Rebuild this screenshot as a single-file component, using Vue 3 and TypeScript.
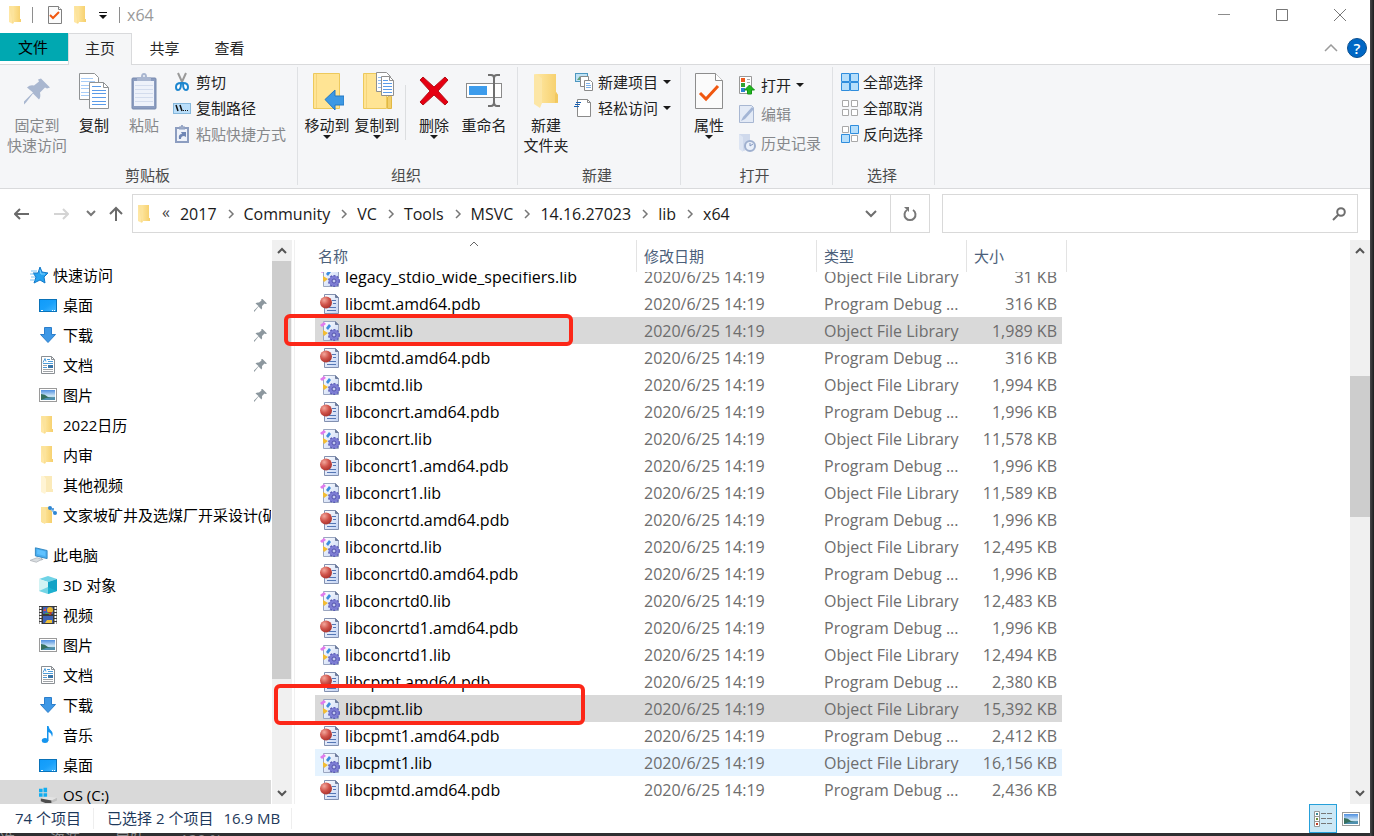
<script setup lang="ts">
interface FileRow {
  name: string
  size: string
  state?: 'selected' | 'hover'
}
interface NavItem {
  label: string
  icon: string
  pinned?: boolean
  root?: boolean
  gap?: boolean
  active?: boolean
}

const crumbs: string[] = ['2017', 'Community', 'VC', 'Tools', 'MSVC', '14.16.27023', 'lib', 'x64']

const nav: NavItem[] = [
  { label: '快速访问', icon: 'star', root: true },
  { label: '桌面', icon: 'desktop', pinned: true },
  { label: '下载', icon: 'download', pinned: true },
  { label: '文档', icon: 'document', pinned: true },
  { label: '图片', icon: 'picture', pinned: true },
  { label: '2022日历', icon: 'folder' },
  { label: '内审', icon: 'folder' },
  { label: '其他视频', icon: 'folder-pale' },
  { label: '文家坡矿井及选煤厂开采设计(矿', icon: 'folder-net' },
  { label: '此电脑', icon: 'pc', root: true, gap: true },
  { label: '3D 对象', icon: 'cube' },
  { label: '视频', icon: 'video' },
  { label: '图片', icon: 'picture' },
  { label: '文档', icon: 'document' },
  { label: '下载', icon: 'download' },
  { label: '音乐', icon: 'music' },
  { label: '桌面', icon: 'desktop' },
  { label: 'OS (C:)', icon: 'drive', active: true },
]

const files: FileRow[] = [
  { name: 'legacy_stdio_wide_specifiers.lib', size: '31 KB' },
  { name: 'libcmt.amd64.pdb', size: '316 KB' },
  { name: 'libcmt.lib', size: '1,989 KB', state: 'selected' },
  { name: 'libcmtd.amd64.pdb', size: '316 KB' },
  { name: 'libcmtd.lib', size: '1,994 KB' },
  { name: 'libconcrt.amd64.pdb', size: '1,996 KB' },
  { name: 'libconcrt.lib', size: '11,578 KB' },
  { name: 'libconcrt1.amd64.pdb', size: '1,996 KB' },
  { name: 'libconcrt1.lib', size: '11,589 KB' },
  { name: 'libconcrtd.amd64.pdb', size: '1,996 KB' },
  { name: 'libconcrtd.lib', size: '12,495 KB' },
  { name: 'libconcrtd0.amd64.pdb', size: '1,996 KB' },
  { name: 'libconcrtd0.lib', size: '12,483 KB' },
  { name: 'libconcrtd1.amd64.pdb', size: '1,996 KB' },
  { name: 'libconcrtd1.lib', size: '12,494 KB' },
  { name: 'libcpmt.amd64.pdb', size: '2,380 KB' },
  { name: 'libcpmt.lib', size: '15,392 KB', state: 'selected' },
  { name: 'libcpmt1.amd64.pdb', size: '2,412 KB' },
  { name: 'libcpmt1.lib', size: '16,156 KB', state: 'hover' },
  { name: 'libcpmtd.amd64.pdb', size: '2,436 KB' },
]

const isLib = (f: FileRow): boolean => f.name.endsWith('.lib')
</script>

<template>
  <div class="desktop">
    <svg class="defs" aria-hidden="true">
      <defs>
        <linearGradient id="g-folder" x1="0" x2="1"><stop offset="0" stop-color="#ffe9a6" /><stop offset="1" stop-color="#f6cf6b" /></linearGradient>
        <linearGradient id="g-blue" x1="0" y1="0" x2="1" y2="1"><stop offset="0" stop-color="#0f9bfa" /><stop offset=".5" stop-color="#18a0fb" /><stop offset="1" stop-color="#45b8ff" /></linearGradient>
        <linearGradient id="g-sky" x1="0" x2="0" y1="0" y2="1"><stop offset="0" stop-color="#4f8fe0" /><stop offset=".6" stop-color="#cfe7f6" /><stop offset="1" stop-color="#7fb0c4" /></linearGradient>
        <radialGradient id="g-ball" cx=".35" cy=".3" r=".8"><stop offset="0" stop-color="#f3a79c" /><stop offset=".5" stop-color="#d0544b" /><stop offset="1" stop-color="#a02a26" /></radialGradient>
        <linearGradient id="g-page" x1="0" y1="0" x2="1" y2="1"><stop offset="0" stop-color="#ffffff" /><stop offset="1" stop-color="#c3d3f3" /></linearGradient>
      </defs>
      <symbol id="folder" viewBox="0 0 18 18"><path d="M4 0h9v13h1v3H4z" fill="url(#g-folder)" /><path d="M2 0l4 3v15l-4-2z" fill="#ffe7a4" /><path d="M6 3v14" stroke="#f1cf78" /><path d="M2 0h3l2 3v13l-1 2z" fill="#fce39b" /></symbol>
      <symbol id="folder-pale" viewBox="0 0 18 18"><path d="M4 0h9v13h1v3H4z" fill="#fbeab9" /><path d="M2 0h3l2 3v13l-1 2-4-2z" fill="#fff4d4" /></symbol>
      <symbol id="folder-net" viewBox="0 0 18 18"><path d="M3 1h8l2 4v12H3z" fill="url(#g-folder)" /><path d="M2 1h3l2 3v12l-1 2-4-2z" fill="#fce39b" /><path d="M11 2l5 5" stroke="#8cc2ef" stroke-width="2" /><circle cx="11" cy="2" r="2" fill="#2f86d2" /><circle cx="16" cy="7" r="2" fill="#2f86d2" /><circle cx="14" cy="3" r="1" fill="#2f86d2" /></symbol>
      <symbol id="star" viewBox="0 0 18 18"><path d="M10 1l2 5 6 1-4 4 1 6-5-3-6 3 2-6-3-4h5z" fill="#25a2ef" stroke="#1379c9" /><path d="M10 4l1 4 4 0" fill="none" stroke="#7fd1ff" /><path d="M1 5h6M0 8h4M1 11h4M0 14h5" stroke="#7fc4f2" /></symbol>
      <symbol id="desktop" viewBox="0 0 18 18"><rect x=".5" y="3.500" width="17" height="12" fill="url(#g-blue)" stroke="#0a72b8" /><path d="M2 14.500h2M13 14.500h1M15 14.500h1" stroke="#fff" /></symbol>
      <symbol id="download" viewBox="0 0 18 18"><path d="M5.500 1.500h7v7h4l-7.500 8-7.500-8h4z" fill="#3e98e6" stroke="#2b7ecb" /></symbol>
      <symbol id="document" viewBox="0 0 18 18"><path d="M2.500.5h10l3 3v14h-13z" fill="#fff" stroke="#8a8f94" /><path d="M12.500.5v3h3" fill="none" stroke="#8a8f94" /><path d="M4 6.500l2-4 1 3M8 3.500h3M9 5.500h5M4 7.500h10M4 11.500h4" stroke="#4c9bd8" fill="none" /><path d="M4 9.500h4M4 13.500h10M4 15.500h10" stroke="#a0a4a8" /><rect x="9" y="9" width="5" height="3" fill="#3774a8" /></symbol>
      <symbol id="picture" viewBox="0 0 18 18"><rect x=".5" y="2.500" width="17" height="13" fill="#fff" stroke="#9a9a9a" /><rect x="2" y="4" width="14" height="10" fill="url(#g-sky)" /><path d="M2 8q4 0 7 3l7 1v2H2z" fill="#37705e" /><path d="M7 12l9-1v3H2z" fill="#4e8fae" /></symbol>
      <symbol id="pc" viewBox="0 0 20 18"><path d="M6 1l13 3v9L6 10z" fill="#4aaef0" stroke="#2c83bd" /><path d="M8 3l9 2v5L8 8z" fill="#5fc2ff" /><path d="M12 12l3 2-3 1" fill="#9aa4ad" /><path d="M0 15l8-3 5 2-6 3z" fill="#d9dde0" stroke="#b5babf" /></symbol>
      <symbol id="cube" viewBox="0 0 18 18"><path d="M9 0l9 3-9 3-9-3z" fill="#6fd3e6" /><path d="M0 3l9 3v12l-9-3z" fill="#d2f3f4" /><path d="M18 3L9 6v12l9-3z" fill="#13a3c6" /><path d="M9 11l9 4-9 3-9-3z" fill="#25bcd8" opacity=".55" /></symbol>
      <symbol id="video" viewBox="0 0 18 18"><rect width="18" height="18" fill="#3a3a3a" /><path d="M1.500 1v17M16.500 1v17" stroke="#fff" stroke-width="2" stroke-dasharray="2 1" /><rect x="4" y="1" width="10" height="7" fill="#3d62b6" /><rect x="4" y="10" width="10" height="7" fill="#3d62b6" /><path d="M4 5l3-3v3z" fill="#e5484a" /><circle cx="11" cy="4" r="3" fill="#e7b52a" /><path d="M9 6h4l-1 3h-2z" fill="#b73a2c" /><path d="M8 14h5v3H6z" fill="#f0c23b" /><path d="M6 7h5v1H6z" fill="#4da24b" /></symbol>
      <symbol id="music" viewBox="0 0 18 18"><ellipse cx="6" cy="14.500" rx="3.200" ry="2.500" fill="#1594ee" /><path d="M8 15V0h1.500q.5 3 3 5 2 2 .5 6-.5-4-3.500-5v9z" fill="#1594ee" /></symbol>
      <symbol id="drive" viewBox="0 0 20 18"><path d="M0 2h4v4H0zM5 1h4v5H5zM0 7h4v4H0zM5 7h4v4H5z" fill="#12adf0" /><path d="M2 13l7-2 11 1-6 3z" fill="#e3e3e3" /><path d="M2 13l12 2v3H7l-5-2z" fill="#4d4d4d" /><path d="M14 15l6-3v3l-6 3z" fill="#c2c2c2" /></symbol>
      <symbol id="pin" viewBox="0 0 26 26"><path d="M17 0l9 9-3 1-2-1-5 5q1 5-1 7l-6-6-7 9-2 2v-3l9-9-6-5q3-3 7-2l5-4-1-2z" /></symbol>
      <symbol id="check" viewBox="0 0 28 36"><path d="M.5.5h20l7 7v28H.5z" fill="#fbfbfb" stroke="#8d8d8d" /><path d="M20.500.5v7h7" fill="#fff" stroke="#8d8d8d" /><path d="M5 20l6 6L23 13" fill="none" stroke="#f0570f" stroke-width="3" /></symbol>
      <symbol id="check-small" viewBox="0 0 14 18"><path d="M.5.5h10l3 3v14H.5z" fill="#fbfbfb" stroke="#808080" /><path d="M10.500.5v3h3" fill="#fff" stroke="#808080" /><path d="M2 9l3 3 6-6" fill="none" stroke="#f0570f" stroke-width="2" /></symbol>
      <symbol id="copy" viewBox="0 0 30 36"><path d="M.5.5h15l4 4v22H.5z" fill="#fff" stroke="#8f9294" /><path d="M2 5.500h12M2 8.500h14M2 12.500h14M2 15.500h14M2 19.500h14M2 22.500h14" stroke="#a8cdf8" /><path d="M10.500 9.500h14l5 5v21h-19z" fill="#fff" stroke="#8f9294" /><path d="M24.500 9.500v5h5" fill="none" stroke="#8f9294" /><path d="M13 13.500h9M13 17.500h14M13 20.500h14M13 24.500h14M13 28.500h14M13 31.500h14" stroke="#5a9be8" /></symbol>
      <symbol id="lib" viewBox="0 0 20 20"><path d="M3.500.5h12l3 3v16h-15z" fill="url(#g-page)" stroke="#9aa6c0" /><path d="M15.500.5v3h3" fill="#6f7d9d" stroke="#6f7d9d" /><path d="M0 4l4-3 2 2-4 3z" fill="#e17bee" /><path d="M6 7l3-4 2 2-3 4z" fill="#3d8cdd" /><path d="M3 9l5 3-4 3-1-2z" fill="#f3bd33" /><circle cx="14" cy="14" r="5" fill="#7373cf" stroke="#5c5cb8" stroke-width="2" stroke-dasharray="2 1.200" /><circle cx="14" cy="14" r="4.800" fill="#7d7dd4" /><circle cx="14" cy="14" r="2" fill="#c3caf0" stroke="#5050aa" /></symbol>
      <symbol id="pdb" viewBox="0 0 20 20"><path d="M4.500.5h11l3 3v16h-14z" fill="url(#g-page)" stroke="#8290b0" /><path d="M15.500.5v3h3" fill="#6f7d9d" stroke="#6f7d9d" /><path d="M12 6.500h4M13 9.500h3M9 13.500h7M7 16.500h9" stroke="#5577b5" /><circle cx="6" cy="8.500" r="6" fill="url(#g-ball)" /></symbol>
    </svg>

    <div class="window">
      <header class="titlebar">
        <svg class="i18"><use href="#folder" /></svg>
        <span class="tsep"></span>
        <button class="plain qcheck" aria-label="属性"><svg width="14" height="18"><use href="#check-small" /></svg></button>
        <button class="plain qfolder" aria-label="新建文件夹"><svg class="i18"><use href="#folder" /></svg></button>
        <button class="plain qmore" aria-label="自定义快速访问工具栏"><svg width="8" height="8" viewBox="0 0 8 8"><path d="M0 .5h8" stroke="#111" /><path d="M0 3h8L4 7z" fill="#111" /></svg></button>
        <span class="tsep"></span>
        <span class="wtitle">x64</span>
        <div class="wbtns">
          <button class="plain" aria-label="最小化"><svg width="12" height="12" viewBox="0 0 12 12"><path d="M0 5.500h12" stroke="#8c8c8c" /></svg></button>
          <button class="plain" aria-label="最大化"><svg width="12" height="12" viewBox="0 0 12 12"><path d="M.5.5h11v11H.5z" fill="none" stroke="#777" /></svg></button>
          <button class="plain" aria-label="关闭"><svg width="12" height="12" viewBox="0 0 12 12"><path d="M0 0l12 12M12 0L0 12" stroke="#777" /></svg></button>
        </div>
      </header>

      <nav class="tabs">
        <button class="tab file">文件</button>
        <button class="tab current">主页</button>
        <button class="tab">共享</button>
        <button class="tab">查看</button>
        <div class="tabtools">
          <button class="plain" aria-label="最小化功能区"><svg width="14" height="8" viewBox="0 0 14 8"><path d="M1 7l6-6 6 6" fill="none" stroke="#9b9b9b" stroke-width="1.500" /></svg></button>
          <button class="plain help" aria-label="帮助">?</button>
        </div>
      </nav>

      <div class="ribbon">
        <section class="group g1">
          <div class="gbody">
            <button class="big wide off"><span class="pic"><svg class="bigpin" width="26" height="27"><use href="#pin" /></svg></span>固定到<br />快速访问</button>
            <button class="big"><span class="pic"><svg width="30" height="36"><use href="#copy" /></svg></span>复制</button>
            <button class="big off"><span class="pic"><svg width="26" height="38" viewBox="0 0 26 38"><rect x="1" y="6" width="24" height="31" rx="1" fill="#8c9dc0" stroke="#7789ae" /><rect x="3" y="9" width="20" height="25" fill="#eef2fa" /><path d="M4 13.500h18M4 17.500h18M4 21.500h18M4 25.500h18M4 29.500h18" stroke="#d3dced" /><path d="M6 9V5h4q0-4 3-4t3 4h4v4z" fill="#a9b6d0" /><circle cx="13" cy="4" r="1" fill="#f0f3f8" /></svg></span>粘贴</button>
            <div class="col">
              <button class="small"><svg viewBox="0 0 20 20"><path d="M6 1l5 11M14 1L9 12" stroke="#9a9a9a" stroke-width="2" /><path d="M9 11q-5 0-5 4 0 3 2 3 3 0 3-7zM11 11q5 0 5 4 0 3-2 3-3 0-3-7z" fill="#fff" stroke="#1d86cf" stroke-width="2" /></svg>剪切</button>
              <button class="small"><svg viewBox="0 0 20 20"><rect x="1.500" y="5.500" width="17" height="10" fill="#b9defa" stroke="#86b8dc" /><path d="M4 7l2 6M8 7l2 6" stroke="#111" stroke-width="1.500" /><path d="M11 12.500h1M13 12.500h1M15 12.500h1" stroke="#111" /></svg>复制路径</button>
              <button class="small off"><svg viewBox="0 0 20 20"><rect x="4" y="4" width="12" height="14" fill="#eef2fa" stroke="#8c9dc0" stroke-width="2" /><path d="M7 5V3h2l1-2 1 2h2v2z" fill="#a0aec9" stroke="#8c9dc0" /><path d="M7 15q-1-5 3-5l-1-2h5v5l-2-1q-3 0-3 3z" fill="#6f86b5" /></svg>粘贴快捷方式</button>
            </div>
          </div>
          <div class="glabel">剪贴板</div>
        </section>

        <section class="group g2">
          <div class="gbody">
            <button class="big"><span class="pic"><svg width="34" height="38" viewBox="0 0 34 38"><path d="M3.500 1.500h26v35h-26z" fill="#ffe494" stroke="#edc95c" /><path d="M6.500 2v34" stroke="#f5d47a" /><path d="M15 27.500L25 18v6h9v9h-9v5z" fill="#3c98e4" stroke="#2479c2" /></svg></span>移动到<i class="arr"></i></button>
            <button class="big"><span class="pic"><svg width="34" height="38" viewBox="0 0 34 38"><path d="M3.500 1.500h23v35h-23z" fill="#ffe494" stroke="#edc95c" /><path d="M6.500 2v34" stroke="#f5d47a" /><path d="M27.500 36.500V25l3-2 1 2v11.500z" fill="#f2cf6b" stroke="#e1b844" /><path d="M16.500.5h10l4 4v15h-14z" fill="#fff" stroke="#909090" /><path d="M18 5.500h3M18 8.500h3M18 11.500h3M18 15.500h3" stroke="#8fbdf2" /><path d="M21.500 4.500h8l4 4v15h-12z" fill="#fff" stroke="#909090" /><path d="M29.500 4.500v4h4" fill="none" stroke="#909090" /><path d="M23 8.500h5M23 11.500h9M23 14.500h9M23 17.500h9M23 20.500h9" stroke="#5a9be8" /></svg></span>复制到<i class="arr"></i></button>
            <span class="minisep"></span>
            <button class="big"><span class="pic"><svg width="32" height="32" viewBox="0 0 32 32"><path d="M2 5l3-3 11 10L27 2l3 3-10 11 10 11-3 3-11-10L5 30l-3-3 10-11z" fill="#e60012" stroke="#b3131b" /></svg></span>删除<i class="arr"></i></button>
            <button class="big"><span class="pic"><svg width="36" height="36" viewBox="0 0 36 36"><rect x=".5" y="10.500" width="35" height="14" fill="#fff" stroke="#8a8a8a" /><rect x="3" y="13" width="18" height="9" fill="#3d9cec" /><path d="M22 2h3q3 0 3 3v24q0 4-3 4h-3M34 2h-3q-3 0-3 3v24q0 4 3 4h3" fill="none" stroke="#707070" stroke-width="2" /></svg></span>重命名</button>
          </div>
          <div class="glabel">组织</div>
        </section>

        <section class="group g3">
          <div class="gbody">
            <button class="big"><span class="pic"><svg width="24" height="36" viewBox="0 0 24 36"><path d="M1 1h21v18l2 3v8H6z" fill="url(#g-folder)" /><path d="M22 19l2 3v7l-3 1V22z" fill="#f1c860" /><path d="M0 1l8 4v25l-2 5-6-4z" fill="#fce6a6" /></svg></span>新建<br />文件夹</button>
            <div class="col">
              <button class="small"><svg viewBox="0 0 20 20"><rect x="1.500" y="1.500" width="12" height="8" fill="#bfe2f5" stroke="#4d97c0" /><path d="M3 8l3-4 3 4z" fill="#5fa07b" /><path d="M6.500 4.500h8v10h-8z" fill="#fff" stroke="#8a8a8a" /><path d="M10.500 8.500h6l2 2v8h-8z" fill="#fff" stroke="#8a8a8a" /><path d="M12 11.500h4M12 13.500h5M12 15.500h5" stroke="#7db1ea" /></svg>新建项目<i class="arr"></i></button>
              <button class="small"><svg viewBox="0 0 20 20"><path d="M3.500 1.500h10l3 3v14h-13z" fill="#fff" stroke="#8a8a8a" /><path d="M13.500 1.500v3h3" fill="none" stroke="#8a8a8a" /><path d="M2 4.500h5M1 6.500h5M0 8.500h5" stroke="#1a5fae" /></svg>轻松访问<i class="arr"></i></button>
            </div>
          </div>
          <div class="glabel">新建</div>
        </section>

        <section class="group g4">
          <div class="gbody">
            <button class="big"><span class="pic"><svg width="28" height="36"><use href="#check" /></svg></span>属性<i class="arr"></i></button>
            <div class="col tall">
              <button class="small"><svg viewBox="0 0 20 20"><path d="M2.500 1.500h12v17h-12z" fill="#fff" stroke="#999" /><path d="M4 3h4v4H4z" fill="#ed5a1e" /><path d="M4 8h4v4H4z" fill="#32a332" /><path d="M4 13h4v4H4z" fill="#2c84d2" /><path d="M10 4.500h3M10 7.500h3" stroke="#aaa" /><path d="M12.500 10l5 5h-3v4h-4v-4h-3z" fill="#20b820" stroke="#149414" /></svg>打开<i class="arr"></i></button>
              <button class="small off"><svg viewBox="0 0 20 20"><path d="M2.500 1.500h12l2 2v15h-14z" fill="#e3eaf6" stroke="#a8b7d2" /><path d="M4 17l2-4L15 3l2 2-9 10z" fill="#a3b5d5" /></svg>编辑</button>
              <button class="small off"><svg viewBox="0 0 20 20"><path d="M2 1h11v13l-6 4-5-2z" fill="#cfd9ec" /><path d="M2 1l4 3v15l-4-3z" fill="#dde5f3" /><circle cx="13" cy="13" r="5" fill="#eaf0fa" stroke="#9fb0cf" stroke-width="2" /><path d="M13 10v3l3-2" fill="none" stroke="#8296be" /></svg>历史记录</button>
            </div>
          </div>
          <div class="glabel">打开</div>
        </section>

        <section class="group g5">
          <div class="gbody">
            <div class="col">
              <button class="small"><svg viewBox="0 0 20 20"><path d="M1.500 1.500h8v8h-8zM10.500 1.500h8v8h-8zM1.500 10.500h8v8h-8zM10.500 10.500h8v8h-8z" fill="#b5defb" stroke="#2f8ddd" /></svg>全部选择</button>
              <button class="small"><svg viewBox="0 0 20 20"><path d="M2.500 2.500h6v6h-6zM11.500 2.500h6v6h-6zM2.500 11.500h6v6h-6zM11.500 11.500h6v6h-6z" fill="#fff" stroke="#a8a8a8" /></svg>全部取消</button>
              <button class="small"><svg viewBox="0 0 20 20"><path d="M2.500 2.500h6v6h-6zM11.500 11.500h6v6h-6z" fill="#fff" stroke="#a8a8a8" /><path d="M10.500 1.500h8v8h-8zM1.500 10.500h8v8h-8z" fill="#b5defb" stroke="#2f8ddd" /></svg>反向选择</button>
            </div>
          </div>
          <div class="glabel">选择</div>
        </section>
      </div>

      <div class="locbar">
        <div class="arrows">
          <button class="plain" aria-label="后退"><svg width="16" height="12" viewBox="0 0 16 12"><path d="M15 6H1M6 1L1 6l5 5" fill="none" stroke="#6a6a6a" stroke-width="2" /></svg></button>
          <button class="plain" aria-label="前进"><svg width="16" height="12" viewBox="0 0 16 12"><path d="M1 6h14M10 1l5 5-5 5" fill="none" stroke="#d4d4d4" stroke-width="2" /></svg></button>
          <button class="plain" aria-label="最近浏览的位置"><svg width="10" height="7" viewBox="0 0 10 7"><path d="M1 1l4 4 4-4" fill="none" stroke="#777" stroke-width="2" /></svg></button>
          <button class="plain" aria-label="上移"><svg width="14" height="16" viewBox="0 0 14 16"><path d="M7 15V2M1 8l6-6 6 6" fill="none" stroke="#6a6a6a" stroke-width="2" /></svg></button>
        </div>
        <div class="address">
          <svg class="i18"><use href="#folder" /></svg>
          <span class="dbl">«</span>
          <template v-for="(c, i) in crumbs" :key="c">
            <svg v-if="i" class="chev" width="7" height="10" viewBox="0 0 7 10"><path d="M1 1l4 4-4 4" fill="none" stroke="#777" stroke-width="1.500" /></svg>
            <a class="crumb" href="#">{{ c }}</a>
          </template>
          <button class="plain drop" aria-label="以前的位置"><svg width="12" height="8" viewBox="0 0 12 8"><path d="M1 1l5 5 5-5" fill="none" stroke="#6e6e6e" stroke-width="2" /></svg></button>
          <button class="plain reload" aria-label="刷新"><svg width="14" height="16" viewBox="0 0 14 16"><path d="M4 4a5.500 5.500 0 1 0 6 0" fill="none" stroke="#777" stroke-width="2" /><path d="M1 1h5v5z" fill="#777" /></svg></button>
        </div>
        <div class="search">
          <input type="text" aria-label="搜索" />
          <svg width="14" height="14" viewBox="0 0 14 14"><circle cx="9" cy="5" r="3.800" fill="none" stroke="#6e6e6e" stroke-width="2" /><path d="M6 8l-5 5" stroke="#6e6e6e" stroke-width="2" /></svg>
        </div>
      </div>

      <main class="main">
        <aside class="side">
          <ul>
            <li v-for="(n, i) in nav" :key="i" :class="{ root: n.root, gap: n.gap, active: n.active }">
              <svg class="nicon"><use :href="'#' + n.icon" /></svg>
              <span class="ntext">{{ n.label }}</span>
              <svg v-if="n.pinned" class="npin"><use href="#pin" /></svg>
            </li>
          </ul>
        </aside>
        <div class="bar left">
          <svg width="10" height="7" viewBox="0 0 10 7"><path d="M1 6l4-4 4 4" fill="none" stroke="#555" stroke-width="2" /></svg>
          <div class="track"><div class="thumb"></div></div>
          <svg width="10" height="7" viewBox="0 0 10 7"><path d="M1 1l4 4 4-4" fill="none" stroke="#555" stroke-width="2" /></svg>
        </div>
        <div class="list">
          <table>
            <thead>
              <tr>
                <th class="cname">名称<svg class="sort" width="10" height="6" viewBox="0 0 10 6"><path d="M1 5l4-4 4 4" fill="none" stroke="#666" /></svg></th>
                <th class="cdate">修改日期</th>
                <th class="ctype">类型</th>
                <th class="csize">大小</th>
              </tr>
            </thead>
            <tbody>
              <tr v-for="f in files" :key="f.name" :class="f.state">
                <td><div class="cell"><svg class="ficon"><use :href="isLib(f) ? '#lib' : '#pdb'" /></svg>{{ f.name }}</div></td>
                <td><div class="cell dim">2020/6/25 14:19</div></td>
                <td><div class="cell dim">{{ isLib(f) ? 'Object File Library' : 'Program Debug ...' }}</div></td>
                <td class="size"><div class="cell dim end">{{ f.size }}</div></td>
              </tr>
            </tbody>
          </table>
        </div>
        <div class="bar right">
          <svg width="10" height="7" viewBox="0 0 10 7"><path d="M1 6l4-4 4 4" fill="none" stroke="#555" stroke-width="2" /></svg>
          <div class="track"><div class="thumb"></div></div>
          <svg width="10" height="7" viewBox="0 0 10 7"><path d="M1 1l4 4 4-4" fill="none" stroke="#555" stroke-width="2" /></svg>
        </div>
        <div class="mark m1"></div>
        <div class="mark m2"></div>
      </main>

      <footer class="status">
        <span class="count">74 个项目</span>
        <span class="picked">已选择 2 个项目</span>
        <span class="total">16.9 MB</span>
        <div class="views">
          <button class="plain view on" aria-label="详细信息"><svg width="18" height="16" viewBox="0 0 18 16"><path d="M.5.5h5v15h-5zM.5 5.500h5M.5 10.500h5" fill="#fff" stroke="#979797" /><path d="M7 2.500h5M13 2.500h5M7 7.500h5M13 7.500h5M7 12.500h5M13 12.500h5" stroke="#777" /><path d="M2 2h2v2H2z" fill="#3d8896" /><path d="M2 7h2v2H2z" fill="#6f8f38" /><path d="M2 12h2v2H2z" fill="#c23b22" /></svg></button>
          <button class="plain view" aria-label="大图标"><svg class="i18"><use href="#picture" /></svg></button>
        </div>
      </footer>
    </div>
    <div class="behind" aria-hidden="true"><span>准</span><span>资源</span><span>属队</span><span>120 %</span></div>
  </div>
</template>

<style>
body {
  background: #1c1c1d;
  overflow: hidden;
}
</style>

<style scoped>
.desktop {
  height: 100vh;
  box-sizing: border-box;
  padding-right: 4px;
  display: flex;
  flex-direction: column;
  background: linear-gradient(90deg, #48484a, #1c1c1d) right / 4px 100% no-repeat #38383a;
  font-family: "Open Sans", "Noto Sans", "Noto Sans CJK SC", sans-serif;
  font-size: 15px;
  line-height: 20px;
  color: #000;
}
.defs { position: absolute; width: 0; height: 0; }
.window {
  flex: 1;
  min-height: 0;
  display: flex;
  flex-direction: column;
  background: #fff;
  overflow: hidden;
}
.behind { flex: none; height: 3px; overflow: hidden; display: flex; gap: 35px; line-height: 12px; color: #8c8c8e; background: #2f2f31; }
button { font: inherit; color: inherit; background: none; border: 0; padding: 0; margin: 0; }
svg { display: block; flex: none; }
.plain { display: flex; align-items: center; justify-content: center; }
.i18 { width: 18px; height: 18px; }

.titlebar { flex: none; height: 33px; padding-left: 7px; display: flex; align-items: center; padding-bottom: 4px; box-sizing: border-box; }
.tsep { width: 1px; height: 16px; margin-left: 7px; background: #8e8e8e; }
.qcheck { margin-left: 15px; }
.qfolder { margin-left: 10px; }
.qmore { margin: 2px 5px 0 9px; }
.wtitle { margin-left: 7px; color: #999; font-size: 16px; }
.wbtns { margin-left: auto; padding-right: 1px; display: flex; }
.wbtns button { width: 58px; height: 28px; }

.tabs { flex: none; height: 32px; display: flex; box-sizing: border-box; box-shadow: inset 0 -1px #d9dadc; }
.tab { width: 65px; height: 29px; color: #262626; }
.tab.file { width: 68px; height: 28px; background: #00a8b1; color: #000; padding-right: 2px; }
.tab.current { width: 64px; height: 32px; background: #f5f6f7; border: 1px solid #d9dadc; border-bottom: 0; padding-bottom: 3px; }
.tabtools { margin-left: auto; height: 30px; display: flex; align-items: center; gap: 9px; padding-right: 3px; }
.help { width: 20px; height: 20px; border-radius: 10px; background: #0067c5; border: 1px solid #0b4f8f; color: #fff; font-weight: 600; }

.ribbon { flex: none; height: 123px; display: flex; background: #f5f6f8; border-bottom: 1px solid #d9dadc; color: #222; }
.group { margin: 2px 0 3px; border-right: 1px solid #dfe1e4; display: flex; flex-direction: column; justify-content: space-between; box-sizing: border-box; }
.g1 { width: 298px; padding-left: 5px; }
.g2 { width: 220px; padding-left: 4px; }
.g3 { width: 163px; padding-left: 3px; }
.g4 { width: 152px; padding-left: 3px; }
.g5 { width: 102px; padding-left: 4px; }
.gbody { display: flex; padding-top: 2px; }
.glabel { text-align: center; color: #4a4a4a; height: 20px; padding-right: 7px; }
.big { width: 50px; padding-top: 3px; display: block; text-align: center; white-space: nowrap; align-self: flex-start; }
.wide { width: 64px; }
.pic { height: 38px; margin-bottom: 5px; display: flex; align-items: center; justify-content: center; }
.off { color: #86888b; }
.bigpin { fill: #a9b7d0; }
.arr { display: block; width: 0; border: 4px solid transparent; border-top-color: #1a1a1a; border-bottom: 0; margin: 0 auto; }
.minisep { width: 1px; height: 55px; margin: 16px 3px 0; background: #dcdee0; }
.col { margin-left: 3px; }
.small { display: flex; align-items: center; gap: 3px; height: 26px; white-space: nowrap; }
.g1 .small, .g3 .small, .g4 .small { gap: 4px; }
.small svg { width: 20px; height: 20px; }
.small .arr { margin-left: 1px; }
.tall { padding-top: 1px; }
.tall .small { height: 29px; }

.locbar { flex: none; height: 51px; box-sizing: border-box; padding: 5px 12px 7px 0; display: grid; grid-template-columns: 132px minmax(0, 798fr) minmax(0, 428fr); }
.arrows { display: flex; align-items: center; padding-left: 14px; box-sizing: border-box; gap: 17px; }
.arrows button:nth-child(1) { margin-right: 6px; }
.arrows button:nth-child(4) { margin-left: -4px; }
.address { display: flex; align-items: center; border: 1px solid #d9d9d9; box-sizing: border-box; padding-left: 3px; font-size: 16px; }
.dbl { margin: 0 10px 3px 8px; color: #444; }
.crumb { color: #1a1a1a; text-decoration: none; }
.chev { margin: 0 9px 0 11px; }
.drop { margin-left: auto; width: 38px; height: 100%; }
.reload { width: 39px; height: 100%; border-left: 1px solid #d9d9d9; }
.search { margin-left: 12px; display: flex; align-items: center; border: 1px solid #d9d9d9; box-sizing: border-box; padding-right: 11px; }
.search input { flex: 1; min-width: 0; border: 0; outline: 0; background: none; height: 30px; font: inherit; }

.main { flex: 1; min-height: 0; position: relative; display: flex; }
.side { width: 271px; overflow: hidden; flex: none; }
.side ul { list-style: none; margin: 0; padding: 20px 0 0; }
.side li { height: 30px; display: flex; align-items: center; padding-left: 39px; white-space: nowrap; }
.side li.root { padding-left: 30px; }
.side li.gap { margin-top: 10px; }
.side li.active { background: #d9d9d9; }
.nicon { width: 18px; height: 18px; margin-right: 6px; }
.root .nicon { margin-right: 5px; }
.ntext { overflow: hidden; flex: 1; }
.npin { width: 13px; height: 13px; fill: #8c979e; margin-right: 4px; }
.bar { flex: none; width: 20px; background: #f0f0f0; display: flex; flex-direction: column; align-items: center; padding: 7px 0; box-sizing: border-box; }
.left { margin-left: 1px; }
.track { flex: 1; width: 100%; display: flex; flex-direction: column; }
.left .track { padding: 7px 0; }
.left .thumb { width: 19px; height: 80%; background: #cdcdcd; }
.right .track { padding: 7px 0; }
.right .thumb { height: 27%; margin-top: 115px; background: #cdcdcd; }
.list { flex: 1; min-width: 0; overflow: hidden; margin-left: 2px; border-left: 1px solid #f0f0f0; padding-left: 20px; }
table { border-collapse: separate; border-spacing: 0; table-layout: fixed; width: 752px; }
th { height: 32px; padding: 0 0 0 7px; font-weight: 400; text-align: left; color: #4c607a; background: #fff; border-right: 1px solid #e3e3e3; box-sizing: border-box; position: relative; z-index: 1; }
th.cname { width: 322px; padding-left: 3px; }
th.cdate { width: 180px; }
th.ctype { width: 150px; }
th.csize { width: 100px; }
.sort { position: absolute; top: 1px; left: 50%; margin-left: -7px; }
td { padding: 0 0 0 7px; font-size: 16px; height: 27px; }
td:first-child { padding-left: 5px; }
td.size { border-right: 5px solid transparent; background-clip: padding-box; padding-right: 5px; }
.cell { height: 27px; display: flex; align-items: center; white-space: nowrap; }
.end { justify-content: flex-end; }
.dim { color: #6d6d6d; }
.ficon { width: 20px; height: 20px; margin-right: 5px; }
tbody tr:first-child td { height: 18px; }
tbody tr:first-child .cell { margin-top: -9px; }
.selected td { background-color: #d9d9d9; }
.hover td { background-color: #e5f3ff; }
.mark { position: absolute; border: 4px solid #fc2718; border-radius: 6px; box-sizing: border-box; }
.m1 { left: 284px; top: 74px; width: 289px; height: 32px; }
.m2 { left: 274px; top: 444px; width: 311px; height: 41px; }

.status { flex: none; height: 29px; display: flex; align-items: center; padding-left: 15px; color: #1e395b; }
.status span { white-space: nowrap; padding-bottom: 1px; }
.status .count { padding-right: 12px; border-right: 1px solid #eee; }
.status .picked { padding-left: 13px; }
.status .total { padding-left: 10px; padding-right: 11px; border-right: 1px solid #eee; }
.views { margin-left: auto; display: flex; align-self: stretch; padding-right: 5px; }
.view { width: 28px; box-sizing: border-box; }
.view.on { background: #cce8f6; border: 1px solid #26a0da; }
</style>
